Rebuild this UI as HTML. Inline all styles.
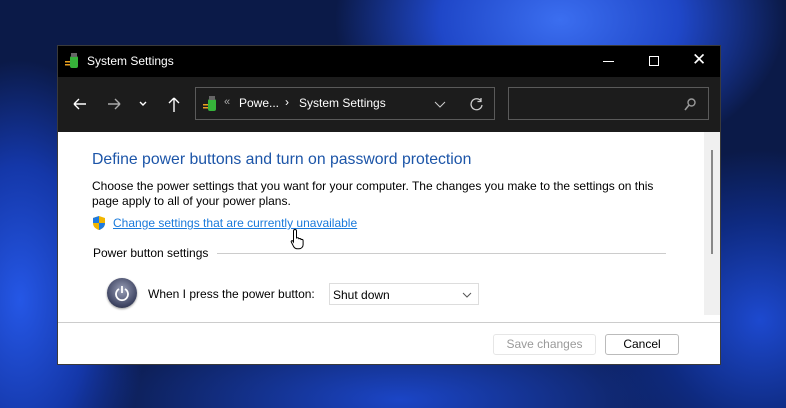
<!DOCTYPE html>
<html><head><meta charset="utf-8"><style>
*{margin:0;padding:0;box-sizing:border-box}
body{width:786px;height:408px;overflow:hidden;position:relative;font-family:"Segoe UI","Liberation Sans",sans-serif;
background:radial-gradient(ellipse 300px 200px at 560px 20px,#3b6ef0 0%,#1f47c8 40%,transparent 75%),
radial-gradient(ellipse 160px 300px at 20px 300px,#2557e6 0%,#1437a8 45%,transparent 80%),
radial-gradient(ellipse 200px 200px at 760px 320px,#1d49cf 0%,#0e2a80 50%,transparent 85%),
radial-gradient(ellipse 400px 120px at 400px 400px,#1b45c6 0%,transparent 80%),
#0b1a48;}
.win{position:absolute;left:57px;top:45px;width:664px;height:320px;background:#fff;border:1px solid #3a3a3a}
.title{position:absolute;left:0;top:0;width:100%;height:31px;background:#000;color:#fff;font-size:12px}
.tool{position:absolute;left:0;top:31px;width:100%;height:55px;background:#1c1c1c}
.addr{position:absolute;left:137px;top:10px;width:300px;height:33px;border:1px solid #5a5a5a;color:#fff;font-size:12px}
.search{position:absolute;left:450px;top:10px;width:201px;height:33px;border:1px solid #5a5a5a}
.t{position:absolute;white-space:nowrap}
.sb{position:absolute;left:646px;top:86px;width:16px;height:183px;background:#f0f0f0}
</style></head><body>
<div class="win">
 <div class="title">
  <svg class="t" style="left:7px;top:6px" width="16" height="18"><rect x="5" y="4" width="8" height="12" rx="2" fill="#36b33a"/><rect x="6" y="1" width="6" height="4" fill="#666"/><rect x="0" y="9" width="5" height="1.5" fill="#e8a020"/><rect x="0" y="12" width="5" height="1.5" fill="#e8a020"/></svg>
  <span class="t" style="left:29px;top:8px">System Settings</span>
  <div class="t" style="left:545px;top:15px;width:11px;height:1px;background:#fff"></div>
  <div class="t" style="left:591px;top:10px;width:10px;height:10px;border:1px solid #fff"></div>
  <span class="t" style="left:634px;top:4px;font-size:17px;font-weight:300">✕</span>
 </div>
 <div class="tool">
  <svg class="t" style="left:14px;top:18px" width="120" height="18" stroke="#fff" stroke-width="1.4" fill="none"><path d="M2 9h12M2 9l5-5M2 9l5 5"/><path d="M36 9h12M48 9l-5-5M48 9l-5 5" stroke="#aaa"/><path d="M68 7l3 3 3-3"/><path d="M102 3v14M102 3l-5 5M102 3l5 5"/></svg>
  <div class="addr">
   <svg class="t" style="left:7px;top:7px" width="16" height="18"><rect x="5" y="4" width="8" height="12" rx="2" fill="#36b33a"/><rect x="6" y="1" width="6" height="4" fill="#666"/><rect x="0" y="9" width="5" height="1.5" fill="#e8a020"/><rect x="0" y="12" width="5" height="1.5" fill="#e8a020"/></svg>
   <span class="t" style="left:28px;top:8px;color:#aaa;font-size:11px">«</span>
   <span class="t" style="left:43px;top:8px">Powe...</span>
   <span class="t" style="left:89px;top:7px">›</span>
   <span class="t" style="left:103px;top:8px">System Settings</span>
   <svg class="t" style="left:238px;top:13px" width="12" height="8"><path d="M1 1l5 5 5-5" stroke="#ccc" fill="none"/></svg>
   <svg class="t" style="left:274px;top:9px" width="14" height="14"><path d="M11 4A5.5 5.5 0 1 0 12 8M11 1v3.5H7.5" stroke="#ccc" fill="none" stroke-width="1.3"/></svg>
  </div>
  <div class="search"><svg class="t" style="left:175px;top:10px" width="12" height="13"><circle cx="7.5" cy="4.5" r="3.5" stroke="#999" fill="none" stroke-width="1.4"/><path d="M5 7l-4 5" stroke="#999" stroke-width="1.6"/></svg></div>
 </div>
 <div class="sb"><div style="position:absolute;left:7px;top:18px;width:2px;height:104px;background:#888"></div></div>
 <span class="t" style="left:34px;top:105px;font-size:15.8px;color:#1c55a8">Define power buttons and turn on password protection</span>
 <div class="t" style="left:34px;top:133px;font-size:12px;color:#000;line-height:15px">Choose the power settings that you want for your computer. The changes you make to the settings on this<br>page apply to all of your power plans.</div>
 <svg class="t" style="left:34px;top:169px" width="14" height="16"><path d="M7 1L1 3v5c0 4 3 6 6 7 3-1 6-3 6-7V3z" fill="#f2b600"/><path d="M7 1v7H1V3zM7 8h6c0 4-3 6-6 7z" fill="#1f7be0"/></svg>
 <span class="t" style="left:55px;top:170px;font-size:12px;color:#1a7adb;text-decoration:underline">Change settings that are currently unavailable</span>
 <svg class="t" style="left:232px;top:182px" width="16" height="22"><path d="M5 1.5c1 0 1.5.6 1.5 1.5v7l1-.3c.8 0 1.3.5 1.3 1l1-.2c.8 0 1.2.5 1.2 1l.8-.1c.9 0 1.3.6 1.3 1.3v4c0 2-1.5 4-4 4H7c-1.5 0-2.5-.8-3.3-2L1.3 14c-.5-.8.5-1.8 1.4-1.2L3.5 14V3c0-.9.6-1.5 1.5-1.5z" fill="#fff" stroke="#000" stroke-width="1"/></svg>
 <span class="t" style="left:35px;top:200px;font-size:12px;color:#000">Power button settings</span>
 <div class="t" style="left:159px;top:207px;width:449px;height:1px;background:#ccc"></div>
 <div class="t" style="left:49px;top:232px;width:30px;height:30px;border-radius:50%;background:radial-gradient(circle at 50% 40%,#9aa0b8,#3c4260 70%,#222);box-shadow:0 1px 2px #999"></div>
 <svg class="t" style="left:55px;top:238px" width="18" height="18"><path d="M6 5a6 6 0 1 0 6 0M9 2v7" stroke="#fff" stroke-width="1.8" fill="none"/></svg>
 <span class="t" style="left:90px;top:241px;font-size:12px;color:#000">When I press the power button:</span>
 <div class="t" style="left:271px;top:237px;width:150px;height:22px;border:1px solid #ddd;font-size:12px;padding:4px 3px">Shut down<svg style="position:absolute;right:6px;top:8px" width="10" height="6"><path d="M1 1l4 4 4-4" stroke="#555" fill="none"/></svg></div>
 <div class="t" style="left:0;top:276px;width:100%;height:1px;background:#ccc"></div>
 <div class="t" style="left:435px;top:288px;width:103px;height:21px;border:1px solid #e6e6e6;border-radius:3px;font-size:12px;color:#9a9a9a;text-align:center;line-height:19px">Save changes</div>
 <div class="t" style="left:547px;top:288px;width:74px;height:21px;border:1px solid #bbb;border-radius:3px;font-size:12px;color:#000;text-align:center;line-height:19px">Cancel</div>
</div>
</body></html>
